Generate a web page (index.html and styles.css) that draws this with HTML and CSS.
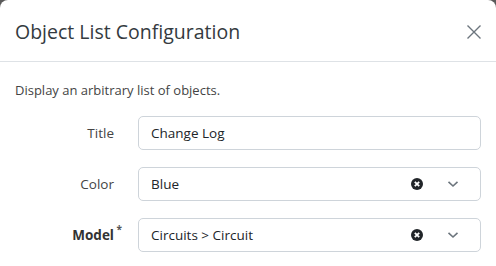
FILE: index.html
```html
<!DOCTYPE html>
<html>
<head>
<meta charset="utf-8">
<link rel="stylesheet" href="styles.css">
</head>
<body>
<div class="modal">
  <div class="modal-header">
    <h1 class="modal-title">Object List Configuration</h1>
    <button class="close" aria-label="Close">
      <svg width="16" height="16" viewBox="0 0 16 16"><path d="M1.5 1.5 L14.5 14.5 M14.5 1.5 L1.5 14.5" stroke="#6c757d" stroke-width="1.4" fill="none"/></svg>
    </button>
  </div>
  <div class="modal-body">
    <p class="desc">Display an arbitrary list of objects.</p>
    <div class="row">
      <label class="label">Title</label>
      <div class="control"><span class="value">Change Log</span></div>
    </div>
    <div class="row">
      <label class="label">Color</label>
      <div class="control">
        <span class="value">Blue</span>
        <span class="icons">
          <svg class="clear" width="12" height="12" viewBox="0 0 12 12"><circle cx="6" cy="6" r="6" fill="#212529"/><path d="M3.8 3.8 L8.2 8.2 M8.2 3.8 L3.8 8.2" stroke="#fff" stroke-width="1.8"/></svg>
          <svg class="chev" width="12" height="8" viewBox="0 0 12 8"><path d="M1.5 1.8 L6 6 L10.5 1.8" stroke="#6c757d" stroke-width="1.6" fill="none"/></svg>
        </span>
      </div>
    </div>
    <div class="row">
      <label class="label bold">Model<sup>*</sup></label>
      <div class="control">
        <span class="value">Circuits &gt; Circuit</span>
        <span class="icons">
          <svg class="clear" width="12" height="12" viewBox="0 0 12 12"><circle cx="6" cy="6" r="6" fill="#212529"/><path d="M3.8 3.8 L8.2 8.2 M8.2 3.8 L3.8 8.2" stroke="#fff" stroke-width="1.8"/></svg>
          <svg class="chev" width="12" height="8" viewBox="0 0 12 8"><path d="M1.5 1.8 L6 6 L10.5 1.8" stroke="#6c757d" stroke-width="1.6" fill="none"/></svg>
        </span>
      </div>
    </div>
  </div>
</div>
</body>
</html>
```

FILE: styles.css
```css
html, body {
  margin: 0;
  padding: 0;
  background: #5a5a5a;
  height: 266px;
  overflow: hidden;
}
body {
  font-family: "Open Sans", "Noto Sans", sans-serif;
  color: #212529;
}
.modal {
  background: #fff;
  width: 496px;
  height: 266px;
  border-radius: 8px 8px 0 0;
}
.modal-header {
  height: 62px;
  border-bottom: 1px solid #dee2e6;
  display: flex;
  align-items: center;
  justify-content: space-between;
  padding: 2px 14px 0 15px;
  box-sizing: border-box;
}
.modal-title {
  margin: 0;
  font-size: 19.5px;
  font-weight: 500;
  color: #343a40;
}
.close {
  border: 0;
  background: none;
  padding: 0;
  width: 16px;
  height: 16px;
  display: flex;
}
.modal-body {
  padding: 19px 15px 0 15px;
}
.desc {
  margin: 0 0 17px 0;
  font-size: 13px;
  color: #444;
  line-height: 18px;
}
.row {
  display: flex;
  align-items: center;
  margin-bottom: 17px;
}
.label {
  width: 99px;
  text-align: right;
  padding-right: 24px;
  font-size: 13.5px;
  color: #444;
  position: relative;
}
.label.bold {
  font-weight: 700;
  color: #333;
}
.label sup {
  position: absolute;
  right: 16px;
  top: -4px;
  font-size: 10px;
  color: #555;
}
.control {
  flex: 1;
  height: 34px;
  box-sizing: border-box;
  border: 1px solid #ced4da;
  border-radius: 5px;
  display: flex;
  align-items: center;
  padding: 0 0 0 12px;
  font-size: 13.5px;
  color: #212529;
}
.value {
  flex: 1;
}
.icons {
  display: flex;
  align-items: center;
  gap: 24px;
  padding-right: 21px;
}
```
